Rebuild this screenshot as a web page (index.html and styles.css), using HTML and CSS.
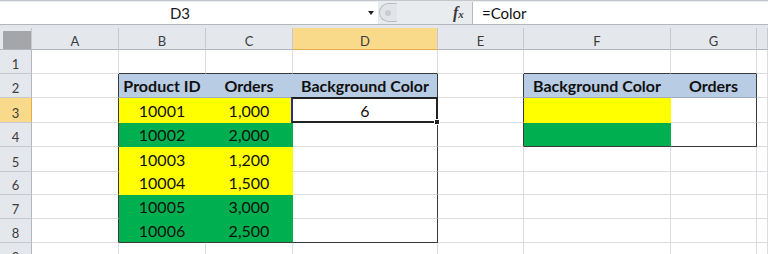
FILE: index.html
```html
<!DOCTYPE html>
<html>
<head>
<meta charset="utf-8">
<link rel="stylesheet" href="styles.css">
</head>
<body>
<div class="fbar">
  <div class="namebox"><span class="nb-text">D3</span><span class="nb-arrow"></span></div>
  <div class="fx-area">
    <div class="grip"><span class="dot"></span></div>
    <span class="fx"><i>f</i><i class="fx-x">x</i></span>
  </div>
  <div class="formula">=Color</div>
</div>
<div class="band"></div>
<div class="sheet">
  <div class="c ch corner"><span class="corner-in"></span></div>
  <div class="c ch">A</div><div class="c ch">B</div><div class="c ch">C</div><div class="c ch chs">D</div><div class="c ch">E</div><div class="c ch">F</div><div class="c ch">G</div><div class="c ch"></div>

  <div class="c rh">1</div>
  <div class="c"></div><div class="c db"></div><div class="c db"></div><div class="c db"></div><div class="c"></div><div class="c db"></div><div class="c db"></div><div class="c"></div>

  <div class="c rh">2</div>
  <div class="c dr"></div><div class="c b">Product ID</div><div class="c b">Orders</div><div class="c b dr">Background Color</div><div class="c dr"></div><div class="c b">Background Color</div><div class="c b dr">Orders</div><div class="c"></div>

  <div class="c rh rhs">3</div>
  <div class="c dr"></div><div class="c y">10001</div><div class="c y">1,000</div><div class="c dr d3">6<span class="sel"><span class="handle"></span></span></div><div class="c dr"></div><div class="c y"></div><div class="c dr"></div><div class="c"></div>

  <div class="c rh">4</div>
  <div class="c dr"></div><div class="c g">10002</div><div class="c g">2,000</div><div class="c dr"></div><div class="c dr"></div><div class="c g db"></div><div class="c dr db"></div><div class="c"></div>

  <div class="c rh">5</div>
  <div class="c dr"></div><div class="c y">10003</div><div class="c y">1,200</div><div class="c dr"></div><div class="c"></div><div class="c"></div><div class="c"></div><div class="c"></div>

  <div class="c rh">6</div>
  <div class="c dr"></div><div class="c y">10004</div><div class="c y">1,500</div><div class="c dr"></div><div class="c"></div><div class="c"></div><div class="c"></div><div class="c"></div>

  <div class="c rh">7</div>
  <div class="c dr"></div><div class="c g">10005</div><div class="c g">3,000</div><div class="c dr"></div><div class="c"></div><div class="c"></div><div class="c"></div><div class="c"></div>

  <div class="c rh">8</div>
  <div class="c dr"></div><div class="c g db">10006</div><div class="c g db">2,500</div><div class="c dr db"></div><div class="c"></div><div class="c"></div><div class="c"></div><div class="c"></div>

  <div class="c rh">9</div>
  <div class="c"></div><div class="c"></div><div class="c"></div><div class="c"></div><div class="c"></div><div class="c"></div><div class="c"></div><div class="c"></div>
</div>
</body>
</html>
```
FILE: styles.css
```css
* { box-sizing: border-box; }
body {
  margin: 0;
  width: 768px;
  height: 254px;
  overflow: hidden;
  background: #fff;
  font-family: Lato, "Open Sans", sans-serif;
  color: #111;
}
.fbar {
  display: flex;
  height: 25px;
  background: #e9ecef;
  border-top: 1px solid #c4c8cd;
  border-bottom: 1px solid #b3b8be;
}
.namebox {
  width: 378px;
  margin-top: 1px;
  height: 22px;
  background: #fff;
  display: flex;
  align-items: center;
}
.nb-text {
  width: 360px;
  text-align: center;
  font-size: 15px;
  color: #1a1a1a;
}
.nb-arrow {
  margin-left: 8px;
  width: 0;
  height: 0;
  border-left: 3px solid transparent;
  border-right: 3px solid transparent;
  border-top: 4px solid #222;
}
.fx-area {
  width: 94px;
  display: flex;
  align-items: center;
  position: relative;
}
.grip {
  margin-left: 1px;
  width: 18px;
  height: 19px;
  border: 1px solid #b9bec4;
  border-right: none;
  border-radius: 10px 0 0 10px;
  background: #e1e4e8;
  display: flex;
  align-items: center;
  padding-left: 5px;
}
.dot {
  width: 6px;
  height: 6px;
  border-radius: 50%;
  background: #c9cdd2;
}
.fx {
  margin-left: 56px;
  font-family: "Liberation Serif", serif;
  font-weight: bold;
  color: #3a3a3a;
  font-size: 16px;
  line-height: 1;
}
.fx-x { font-size: 11px; }
.formula {
  flex: 1;
  background: #fff;
  border-left: 1px solid #b7bbc0;
  margin-top: 1px;
  height: 22px;
  padding-left: 9px;
  font-size: 15px;
  line-height: 22px;
  color: #111;
}
.band {
  height: 3px;
  background: #e3e6ea;
}
.sheet {
  display: grid;
  grid-template-columns: 32px 87px 87px 87px 145px 86px 147px 86px 1fr;
  grid-template-rows: 22px 24px 24px 25px 24px 25px 23px 24px 24px 24px;
}
.c {
  border-right: 1px solid #dcdde0;
  border-bottom: 1px solid #dcdde0;
  display: flex;
  align-items: flex-end;
  justify-content: center;
  font-size: 16px;
  line-height: 20px;
  padding-bottom: 1px;
  white-space: nowrap;
}
.ch {
  background: #e4e7eb;
  border-right-color: #c6cace;
  border-bottom-color: #b2b7bd;
  font-size: 13px;
  line-height: 16px;
  padding-bottom: 0;
  color: #3c3c3c;
}
.chs {
  background: #f9da8a;
  border-bottom-color: #e3ad48;
}
.corner {
  padding: 3px 0 0 3px;
  align-items: stretch;
  justify-content: stretch;
}
.corner-in {
  flex: 1;
  background: #a4a6a9;
}
.rh {
  background: #e4e7eb;
  border-right-color: #b2b7bd;
  border-bottom-color: #c6cace;
  font-size: 13px;
  line-height: 16px;
  color: #3c3c3c;
}
.rhs {
  background: #f9da8a;
  border-right-color: #e3ad48;
}
.y {
  background: #ffff00;
  border-color: #ffff00;
}
.g {
  background: #00b050;
  border-color: #00b050;
}
.b {
  background: #b8cce4;
  border-right-color: #b8cce4;
  border-bottom-color: #9eadbf;
  font-weight: 700;
  color: #111;
}
.dr { border-right-color: #3a3a3a; }
.db { border-bottom-color: #3a3a3a; }
.d3 { position: relative; }
.sel {
  position: absolute;
  left: -2px;
  top: -1px;
  right: -1px;
  bottom: -1px;
  border: 2px solid #222;
  border-left-color: #2b2b9c;
}
.handle {
  position: absolute;
  right: -4px;
  bottom: -4px;
  width: 6px;
  height: 6px;
  background: #222;
  border: 1px solid #fff;
}
```
